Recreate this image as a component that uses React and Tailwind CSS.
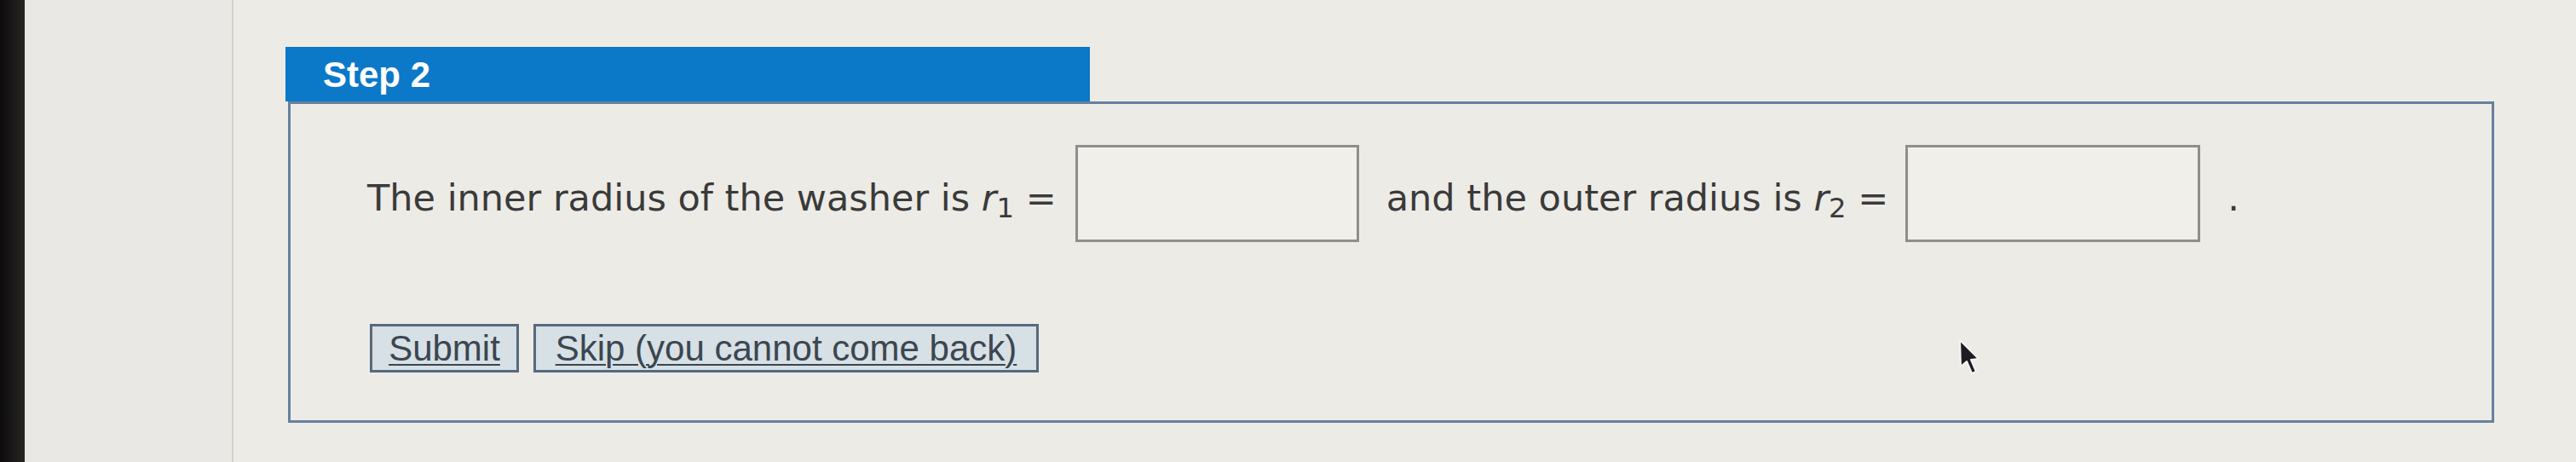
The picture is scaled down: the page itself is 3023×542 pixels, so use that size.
import React from 'react';

const verdana = { fontFamily: '"DejaVu Sans", Verdana, sans-serif' };

const Cursor = () => (
  <svg className="absolute left-[2297px] top-[397px]" width="30" height="46" viewBox="0 0 30 46">
    <path d="M3 2 L4 33 L11 27 L17 41 L22 39 L16 25 L25 24 Z" fill="#1f1a20" stroke="#f4f4f4" strokeWidth="2" strokeLinejoin="round" />
  </svg>
);

const AnswerBox = ({ width }) => (
  <div className={`h-[114px] border-[3px] border-[#8e8e8c] bg-[#f0efea] ${width}`} />
);

const App = () => {
  return (
    <div className="relative flex h-[542px] w-[3023px] overflow-hidden bg-[#edebe6]">
      {/* monitor bezel */}
      <div className="h-full w-[29px] bg-linear-to-r from-[#0c0c0c] to-[#2a2525]" />
      {/* left page gutter */}
      <div className="h-full w-[245px] border-r-2 border-[#d2d1cc] bg-[#e9e8e4]" />

      <div className="flex-1 pl-[61px] pt-[55px]">
        {/* Step header */}
        <div className="flex h-[64px] w-[944px] items-center bg-[#0b78c8] pl-[44px]">
          <span className="text-[42px] font-bold text-white font-['Liberation_Sans',Arial,sans-serif]">
            Step 2
          </span>
        </div>

        {/* Step body */}
        <div className="ml-[3px] h-[377px] w-[2589px] border-[3px] border-[#66809e] pl-[90px] pt-[48px]">
          <div className="flex h-[114px] items-center text-[43px] text-[#3a3a3a]" style={verdana}>
            <span className="mt-[10px] whitespace-pre">
              The inner radius of the washer is <i>r</i><sub>1</sub> =
            </span>
            <div className="ml-[22px]">
              <AnswerBox width="w-[333px]" />
            </div>
            <span className="ml-[32px] mt-[10px] whitespace-pre">
              and the outer radius is <i>r</i><sub>2</sub> =
            </span>
            <div className="ml-[20px]">
              <AnswerBox width="w-[346px]" />
            </div>
            <span className="ml-[32px] mt-[10px]">.</span>
          </div>

          <div className="ml-[3px] mt-[96px] flex gap-[17px] font-['Liberation_Sans',Arial,sans-serif] text-[42px] text-[#3c4650]">
            <button className="flex h-[57px] w-[175px] items-center justify-center border-[3px] border-[#56697e] bg-[#d6e0e5] underline decoration-2 underline-offset-4">
              Submit
            </button>
            <button className="flex h-[57px] w-[593px] items-center justify-center border-[3px] border-[#56697e] bg-[#d6e0e5] underline decoration-2 underline-offset-4">
              Skip (you cannot come back)
            </button>
          </div>
        </div>
      </div>

      <Cursor />
    </div>
  );
};

export default App;
